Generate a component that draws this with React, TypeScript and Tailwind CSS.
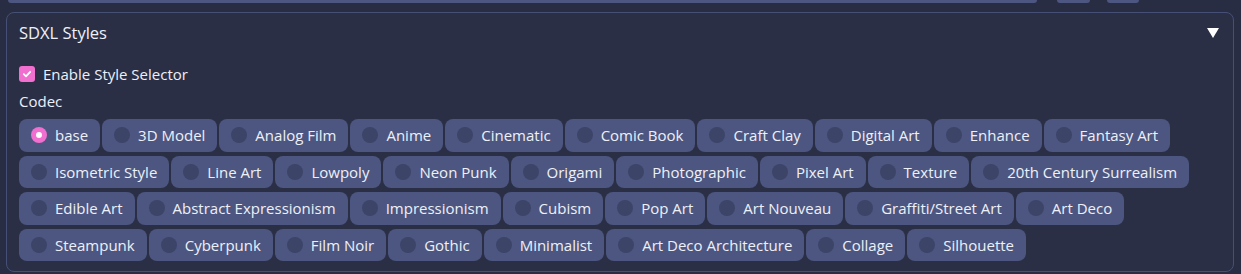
import React from "react";

const styles = [
  "base","3D Model","Analog Film","Anime","Cinematic","Comic Book","Craft Clay","Digital Art","Enhance","Fantasy Art",
  "Isometric Style","Line Art","Lowpoly","Neon Punk","Origami","Photographic","Pixel Art","Texture","20th Century Surrealism",
  "Edible Art","Abstract Expressionism","Impressionism","Cubism","Pop Art","Art Nouveau","Graffiti/Street Art","Art Deco",
  "Steampunk","Cyberpunk","Film Noir","Gothic","Minimalist","Art Deco Architecture","Collage","Silhouette",
];

export default function App() {
  const [sel, setSel] = React.useState("base");
  const [on, setOn] = React.useState(true);
  return (
    <div
      className="w-full h-[274px] overflow-hidden bg-[#292d43] text-[#eef0f8]"
      style={{ fontFamily: '"Open Sans", "Liberation Sans", sans-serif' }}
    >
      <div className="flex h-[3px]">
        <div className="ml-[8px] w-[1029px] h-[3px] rounded-b-md bg-[#4c5680]" />
        <div className="ml-[20px] w-[33px] h-[3px] rounded-b-md bg-[#4c5680]" />
        <div className="ml-[17px] w-[32px] h-[3px] rounded-b-md bg-[#4c5680]" />
      </div>
      <div className="mt-[9px] ml-[6px] mr-[7px] h-[260px] rounded-lg border border-[#465076] bg-[#2a2f46] px-[12px]">
        <div className="flex items-center justify-between h-[24px] mt-[8px]">
          <span className="text-[16.5px]">SDXL Styles</span>
          <svg width="12" height="10" viewBox="0 0 12 10" className="mr-[2px]">
            <polygon points="0,0 12,0 6,10" fill="white" />
          </svg>
        </div>
        <label className="mt-[21px] flex items-center gap-[8px] h-[16px] cursor-pointer" onClick={() => setOn(!on)}>
          <span className="w-[16px] h-[16px] rounded-[3px] bg-[#f06fcf] flex items-center justify-center">
            {on && (
              <svg width="10" height="10" viewBox="0 0 10 10">
                <path d="M1.8 5.2 L4 7.3 L8.2 2.8" fill="none" stroke="white" strokeWidth="1.8" strokeLinecap="round" strokeLinejoin="round" />
              </svg>
            )}
          </span>
          <span className="text-[15px]">Enable Style Selector</span>
        </label>
        <div className="mt-[9px] text-[15px] leading-[20px]">Codec</div>
        <div className="mt-[8px] flex flex-wrap gap-x-[2px] gap-y-[4px]">
          {styles.map((s) => (
            <button
              key={s}
              onClick={() => setSel(s)}
              className="h-[32.5px] flex items-center gap-[8px] pl-[12px] pr-[12px] rounded-lg bg-[#4c5680] text-[15px] text-[#eef0f8]"
            >
              {sel === s ? (
                <span className="w-[16px] h-[16px] rounded-full bg-[#f06fcf] flex items-center justify-center">
                  <span className="w-[6px] h-[6px] rounded-full bg-white" />
                </span>
              ) : (
                <span className="w-[16px] h-[16px] rounded-full bg-[#3c4468]" />
              )}
              <span>{s}</span>
            </button>
          ))}
        </div>
      </div>
    </div>
  );
}
